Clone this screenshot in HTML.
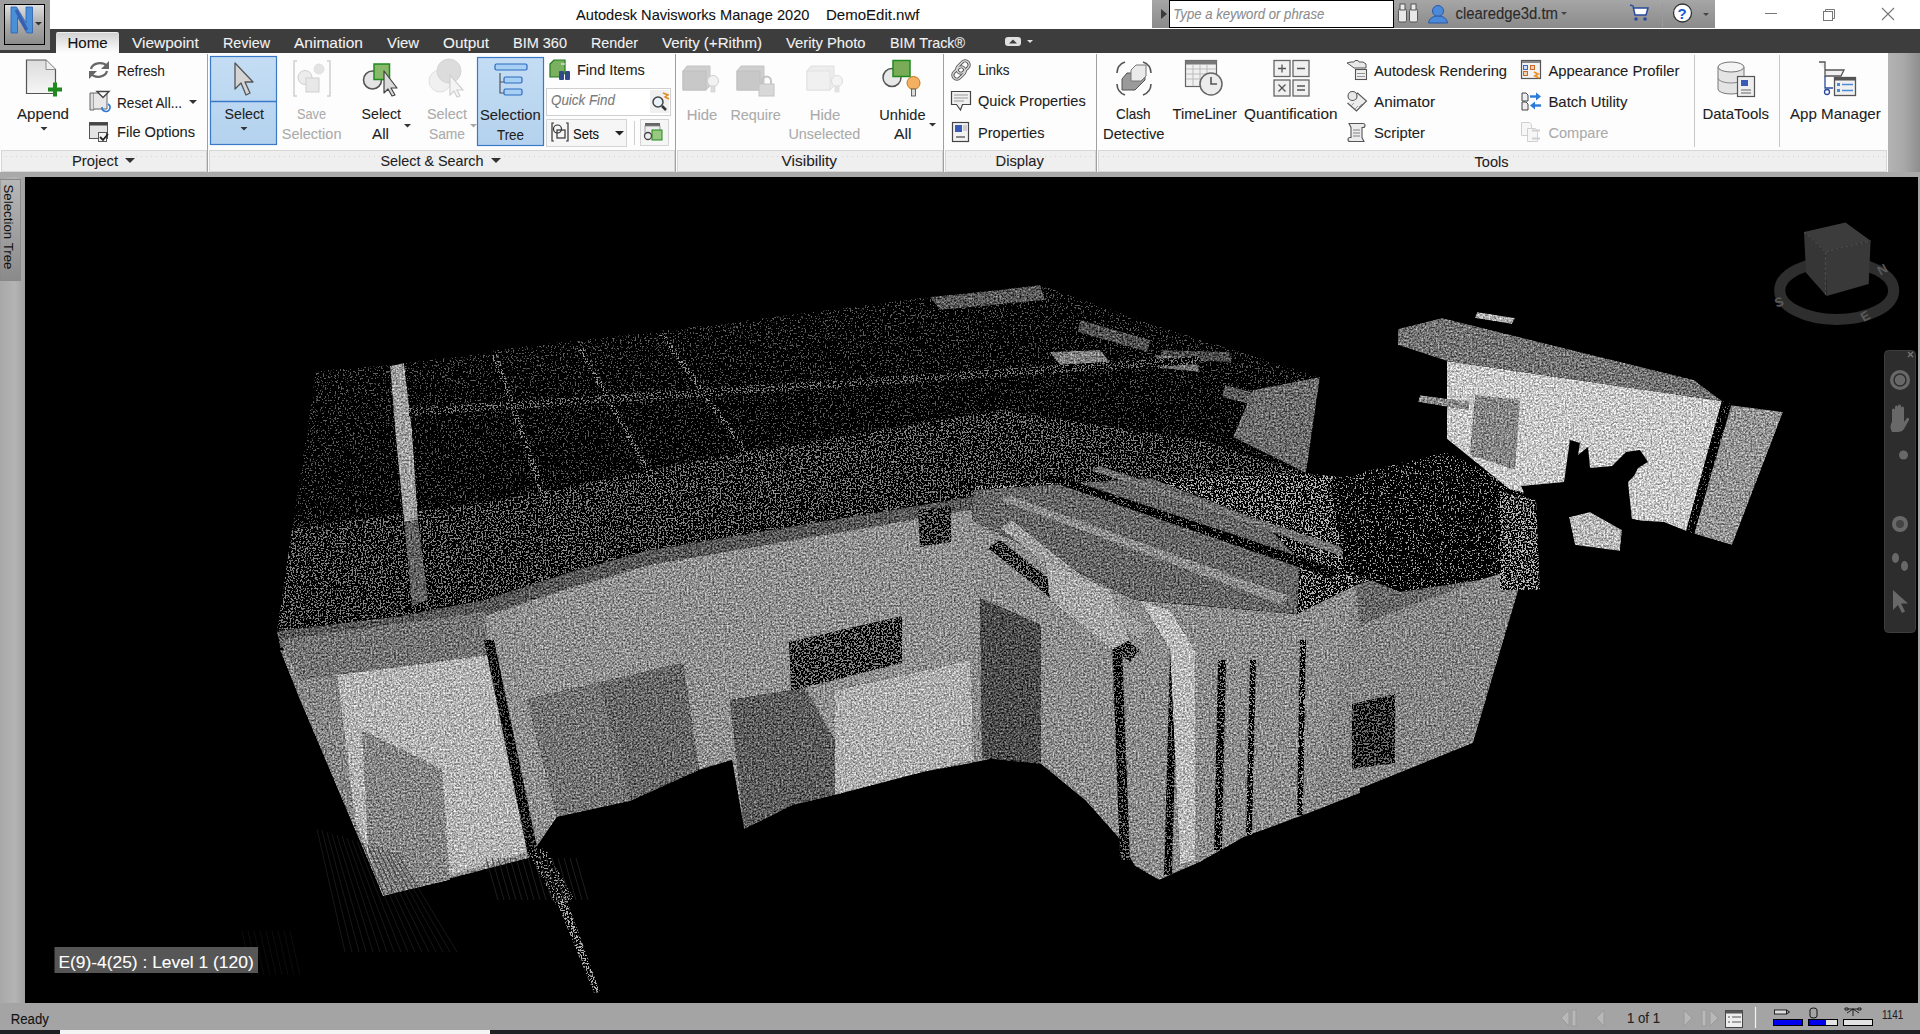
<!DOCTYPE html>
<html><head><meta charset="utf-8">
<style>
*{margin:0;padding:0;box-sizing:border-box}
html,body{width:1920px;height:1034px;overflow:hidden;background:#000;font-family:"Liberation Sans",sans-serif;}
.a{position:absolute}
svg text{font-family:"Liberation Sans",sans-serif}
</style></head><body>
<!-- title bar -->
<div class="a" style="left:0;top:0;width:1920px;height:29px;background:#fff"></div>
<div class="a" style="left:0;top:0;width:50px;height:50px;background:#9c9c9c"></div>
<div class="a" style="left:4px;top:4px;width:41px;height:41px;border:1px solid #000;background:linear-gradient(#e0e0e0,#a8a8a8 55%,#8c8c8c)"></div>
<!-- infocenter -->
<div class="a" style="left:1152px;top:0;width:563px;height:28px;background:linear-gradient(#a6a6a6,#8a8a8a)"></div>
<div class="a" style="left:1169px;top:0;width:225px;height:28px;background:#fff;border:1px solid #000"></div>
<!-- tab bar -->
<div class="a" style="left:50px;top:29px;width:1870px;height:24px;background:#3d3d3d"></div>
<div class="a" style="left:0;top:50px;width:50px;height:3px;background:#3d3d3d"></div>
<div class="a" style="left:56px;top:32px;width:63px;height:21px;background:linear-gradient(#d2d2d2,#f6f6f6 80%,#fdfdfd);border-radius:2px 2px 0 0;border-top:1px solid #eee"></div>
<!-- ribbon -->
<div class="a" style="left:0;top:53px;width:1888px;height:119px;background:#fdfdfd"></div>
<div class="a" style="left:1888px;top:53px;width:32px;height:119px;background:linear-gradient(90deg,#b4b4b4,#a8a8a8 50%,#8e8e8e)"></div>
<div class="a" style="left:0;top:172px;width:1920px;height:5px;background:#a9a9a9"></div>
<!-- viewport -->
<div class="a" style="left:0;top:177px;width:25px;height:826px;background:linear-gradient(90deg,#a8a8a8,#b4b4b4 60%,#a0a0a0)"></div>
<div class="a" style="left:25px;top:177px;width:1893px;height:826px;background:#000"></div>
<div class="a" style="left:1918px;top:177px;width:2px;height:826px;background:#a5a5a5"></div>
<!-- status bar -->
<div class="a" style="left:0;top:1003px;width:1920px;height:27px;background:#a4a4a4"></div>
<div class="a" style="left:0;top:1030px;width:1920px;height:4px;background:#1f2023"></div>
<div class="a" style="left:60px;top:1030px;width:430px;height:4px;background:#f4f4f4"></div>
<svg class="a" style="left:0;top:0" width="1920" height="1034" viewBox="0 0 1920 1034">
<defs>
<filter id="spk0" filterUnits="userSpaceOnUse" x="25" y="177" width="1893" height="826" color-interpolation-filters="sRGB">
<feTurbulence type="fractalNoise" baseFrequency="0.55" numOctaves="2" seed="11" result="t"/>
<feColorMatrix in="t" type="matrix" values="1 0 0 0 0  1 0 0 0 0  1 0 0 0 0  0 0 0 0 1" result="g"/>
<feComposite in="SourceGraphic" in2="g" operator="arithmetic" k1="0" k2="1" k3="1.0" k4="-0.5" result="c"/>
<feComposite in="c" in2="SourceGraphic" operator="in"/>
</filter>
<filter id="spk1" filterUnits="userSpaceOnUse" x="25" y="177" width="1893" height="826" color-interpolation-filters="sRGB">
<feTurbulence type="fractalNoise" baseFrequency="0.55" numOctaves="2" seed="12" result="t"/>
<feColorMatrix in="t" type="matrix" values="1 0 0 0 0  1 0 0 0 0  1 0 0 0 0  0 0 0 0 1" result="g"/>
<feComponentTransfer in="g" result="b"><feFuncR type="linear" slope="12" intercept="-7.3454"/><feFuncG type="linear" slope="12" intercept="-7.3454"/><feFuncB type="linear" slope="12" intercept="-7.3454"/></feComponentTransfer>
<feComposite in="SourceGraphic" in2="b" operator="arithmetic" k1="1" k2="0" k3="0" k4="0"/>
</filter>
<filter id="spk2" filterUnits="userSpaceOnUse" x="25" y="177" width="1893" height="826" color-interpolation-filters="sRGB">
<feTurbulence type="fractalNoise" baseFrequency="0.6" numOctaves="2" seed="13" result="t"/>
<feColorMatrix in="t" type="matrix" values="1 0 0 0 0  1 0 0 0 0  1 0 0 0 0  0 0 0 0 1" result="g"/>
<feComponentTransfer in="g" result="b"><feFuncR type="linear" slope="12" intercept="-6.9925"/><feFuncG type="linear" slope="12" intercept="-6.9925"/><feFuncB type="linear" slope="12" intercept="-6.9925"/></feComponentTransfer>
<feComposite in="SourceGraphic" in2="b" operator="arithmetic" k1="1" k2="0" k3="0" k4="0"/>
</filter>
<filter id="spk3" filterUnits="userSpaceOnUse" x="25" y="177" width="1893" height="826" color-interpolation-filters="sRGB">
<feTurbulence type="fractalNoise" baseFrequency="0.6" numOctaves="2" seed="14" result="t"/>
<feColorMatrix in="t" type="matrix" values="1 0 0 0 0  1 0 0 0 0  1 0 0 0 0  0 0 0 0 1" result="g"/>
<feComponentTransfer in="g" result="b"><feFuncR type="linear" slope="12" intercept="-6.4713"/><feFuncG type="linear" slope="12" intercept="-6.4713"/><feFuncB type="linear" slope="12" intercept="-6.4713"/></feComponentTransfer>
<feComposite in="SourceGraphic" in2="b" operator="arithmetic" k1="1" k2="0" k3="0" k4="0"/>
</filter>
<filter id="spk4" filterUnits="userSpaceOnUse" x="25" y="177" width="1893" height="826" color-interpolation-filters="sRGB">
<feTurbulence type="fractalNoise" baseFrequency="0.55" numOctaves="2" seed="15" result="t"/>
<feColorMatrix in="t" type="matrix" values="1 0 0 0 0  1 0 0 0 0  1 0 0 0 0  0 0 0 0 1" result="g"/>
<feComponentTransfer in="g" result="b"><feFuncR type="linear" slope="12" intercept="-6.2551"/><feFuncG type="linear" slope="12" intercept="-6.2551"/><feFuncB type="linear" slope="12" intercept="-6.2551"/></feComponentTransfer>
<feComposite in="SourceGraphic" in2="b" operator="arithmetic" k1="1" k2="0" k3="0" k4="0"/>
</filter>
<filter id="spk5" filterUnits="userSpaceOnUse" x="25" y="177" width="1893" height="826" color-interpolation-filters="sRGB">
<feTurbulence type="fractalNoise" baseFrequency="0.6" numOctaves="2" seed="16" result="t"/>
<feColorMatrix in="t" type="matrix" values="1 0 0 0 0  1 0 0 0 0  1 0 0 0 0  0 0 0 0 1" result="g"/>
<feComponentTransfer in="g" result="b"><feFuncR type="linear" slope="12" intercept="-6.2551"/><feFuncG type="linear" slope="12" intercept="-6.2551"/><feFuncB type="linear" slope="12" intercept="-6.2551"/></feComponentTransfer>
<feComposite in="SourceGraphic" in2="b" operator="arithmetic" k1="1" k2="0" k3="0" k4="0"/>
</filter>
<filter id="spk6" filterUnits="userSpaceOnUse" x="25" y="177" width="1893" height="826" color-interpolation-filters="sRGB">
<feTurbulence type="fractalNoise" baseFrequency="0.6" numOctaves="2" seed="17" result="t"/>
<feColorMatrix in="t" type="matrix" values="1 0 0 0 0  1 0 0 0 0  1 0 0 0 0  0 0 0 0 1" result="g"/>
<feComponentTransfer in="g" result="b"><feFuncR type="linear" slope="12" intercept="-6.0549"/><feFuncG type="linear" slope="12" intercept="-6.0549"/><feFuncB type="linear" slope="12" intercept="-6.0549"/></feComponentTransfer>
<feComposite in="SourceGraphic" in2="b" operator="arithmetic" k1="1" k2="0" k3="0" k4="0"/>
</filter>
<filter id="spk7" filterUnits="userSpaceOnUse" x="25" y="177" width="1893" height="826" color-interpolation-filters="sRGB">
<feTurbulence type="fractalNoise" baseFrequency="0.55" numOctaves="2" seed="18" result="t"/>
<feColorMatrix in="t" type="matrix" values="1 0 0 0 0  1 0 0 0 0  1 0 0 0 0  0 0 0 0 1" result="g"/>
<feComponentTransfer in="g" result="b"><feFuncR type="linear" slope="12" intercept="-5.8648"/><feFuncG type="linear" slope="12" intercept="-5.8648"/><feFuncB type="linear" slope="12" intercept="-5.8648"/></feComponentTransfer>
<feComposite in="SourceGraphic" in2="b" operator="arithmetic" k1="1" k2="0" k3="0" k4="0"/>
</filter>
<filter id="spk8" filterUnits="userSpaceOnUse" x="25" y="177" width="1893" height="826" color-interpolation-filters="sRGB">
<feTurbulence type="fractalNoise" baseFrequency="0.6" numOctaves="2" seed="19" result="t"/>
<feColorMatrix in="t" type="matrix" values="1 0 0 0 0  1 0 0 0 0  1 0 0 0 0  0 0 0 0 1" result="g"/>
<feComponentTransfer in="g" result="b"><feFuncR type="linear" slope="12" intercept="-5.8648"/><feFuncG type="linear" slope="12" intercept="-5.8648"/><feFuncB type="linear" slope="12" intercept="-5.8648"/></feComponentTransfer>
<feComposite in="SourceGraphic" in2="b" operator="arithmetic" k1="1" k2="0" k3="0" k4="0"/>
</filter>
</defs>
<g filter="url(#spk2)">
<polygon points="316,371 391,365 406,363 489,353 495,350 728,323 930,297 1040,285 1160,327 1320,377 1306,473 1000,492 650,550 570,572 484,600 400,616 277,631" fill="#5e5e5e"/>
</g>
<g filter="url(#spk5)">
<polygon points="292,529 500,500 728,455 1000,410 1200,440 1306,473 1000,492 650,550 570,572 484,600 400,616 277,631" fill="#888888"/>
</g>
<g filter="url(#spk0)">
<polygon points="1080,320 1150,340 1148,352 1078,332" fill="#525252"/>
<polygon points="1225,385 1275,398 1272,410 1222,397" fill="#595959"/>
<polygon points="1160,350 1230,352 1232,362 1162,360" fill="#4c4c4c"/>
<polygon points="1290,385 1315,378 1310,400 1288,400" fill="#595959"/>
<polygon points="1253,390 1320,377 1306,473 1233,437" fill="#6b6b6b"/>
<polygon points="390,366 404,363 412,430 418,520 404,522 396,440" fill="#9e9e9e"/>
<polygon points="404,522 418,520 428,600 412,606" fill="#616161"/>
<polygon points="930,297 1000,290 1040,285 1045,300 940,310" fill="#595959"/>
<polygon points="1050,352 1100,350 1110,362 1060,365" fill="#808080"/>
<polygon points="1155,355 1195,358 1200,372 1160,368" fill="#737373"/>
</g>
<g filter="url(#spk5)">
<polygon points="491,354 497,353 568,554 562,556" fill="#999999"/>
<polygon points="577,348 583,347 685,531 679,533" fill="#999999"/>
<polygon points="658,334 664,333 786,503 780,505" fill="#999999"/>
<polygon points="409,408 1060,365 1200,356 1200,364 1060,373 409,416" fill="#888888"/>
</g>
<g filter="url(#spk0)">
<polygon points="277,633 400,618 484,602 570,574 650,552 1000,494 1005,756 967,764 923,772 835,795 793,805 744,829 732,760 699,770 630,801 557,817 529,858 383,896" fill="#8f8f8f"/>
<polygon points="277,631 400,616 484,600 570,572 650,550 1000,492 1000,505 650,565 570,588 484,616 400,634 280,648" fill="#575757"/>
<polygon points="335,655 486,640 530,851 383,896 355,820" fill="#b2b2b2"/>
<polygon points="280,650 335,655 355,820 383,896 300,700" fill="#858585"/>
<polygon points="362,730 442,769 450,880 383,896 368,850" fill="#858585"/>
<polygon points="280,640 484,612 490,655 300,680" fill="#737373"/>
</g>
<g filter="url(#spk4)">
<polygon points="484,640 494,640 538,852 528,856" fill="#666666"/>
</g>
<g filter="url(#spk0)">
<polygon points="527,699 683,663 699,770 630,801 557,817" fill="#737373"/>
<polygon points="600,685 683,663 699,770 630,801" fill="#666666"/>
</g>
<g filter="url(#spk7)">
<polygon points="789,642 902,616 902,663 791,691" fill="#8c8c8c"/>
</g>
<g filter="url(#spk0)">
<polygon points="730,700 805,688 835,740 835,795 793,805 744,829" fill="#5c5c5c"/>
<polygon points="835,690 970,660 975,760 923,772 835,795" fill="#adadad"/>
</g>
<g filter="url(#spk7)">
<polygon points="918,510 951,506 951,542 920,547" fill="#808080"/>
</g>
<g filter="url(#spk3)">
<polygon points="528,852 545,848 575,900 556,905" fill="#a3a3a3"/>
</g>
<g filter="url(#spk8)">
<polygon points="556,900 566,898 600,992 594,993" fill="#b3b3b3"/>
</g>
<g filter="url(#spk6)">
<polygon points="974,486 1306,473 1534,500 1535,534 1356,585 1297,614 1135,600 972,520" fill="#bdbdbd"/>
</g>
<g filter="url(#spk0)">
<polygon points="974,490 1150,478 1260,520 1300,560 1297,614 1135,600 972,520" fill="#666666"/>
<polygon points="1000,500 1010,496 1290,596 1280,604" fill="#8c8c8c"/>
</g>
<g filter="url(#spk2)">
<polygon points="1040,478 1052,474 1340,570 1330,578" fill="#888888"/>
</g>
<g filter="url(#spk0)">
<polygon points="1090,470 1100,466 1380,560 1370,566" fill="#737373"/>
<polygon points="972,520 1135,600 1297,614 1356,585 1360,793 1309,813 1244,837 1200,862 1159,880 1135,866 1118,837 1086,801 1041,764 972,756" fill="#8c8c8c"/>
<polygon points="1356,585 1535,534 1473,743 1310,809" fill="#858585"/>
<polygon points="1356,585 1535,534 1530,560 1360,625" fill="#666666"/>
</g>
<g filter="url(#spk8)">
<polygon points="988,548 1000,540 1140,650 1130,662" fill="#8c8c8c"/>
</g>
<g filter="url(#spk0)">
<polygon points="1000,528 1012,520 1150,630 1140,640" fill="#9e9e9e"/>
<polygon points="980,598 1041,625 1041,764 982,758" fill="#4c4c4c"/>
</g>
<g filter="url(#spk7)">
<polygon points="1352,704 1395,694 1395,763 1352,769" fill="#737373"/>
</g>
<g filter="url(#spk4)">
<polygon points="1112,640 1122,645 1130,860 1120,860" fill="#808080"/>
<polygon points="1170,650 1178,650 1172,875 1164,875" fill="#808080"/>
<polygon points="1218,660 1226,660 1222,850 1214,850" fill="#999999"/>
<polygon points="1250,660 1256,660 1252,835 1246,835" fill="#aaaaaa"/>
<polygon points="1300,640 1306,640 1303,815 1297,815" fill="#aaaaaa"/>
</g>
<g filter="url(#spk0)">
<polygon points="1140,600 1170,610 1195,650 1195,860 1180,865 1170,650" fill="#b8b8b8"/>
<polygon points="1045,560 1110,590 1130,640 1112,650 1050,600" fill="#a6a6a6"/>
</g>
<g filter="url(#spk2)">
<polygon points="1330,480 1447,452 1526,492 1560,520 1545,560 1480,580 1400,592 1345,570" fill="#aaaaaa"/>
</g>
<g filter="url(#spk0)">
<polygon points="1398,329 1442,318 1694,380 1722,401 1447,361 1398,345" fill="#737373"/>
<polygon points="1477,312 1515,318 1512,324 1475,318" fill="#b2b2b2"/>
<polygon points="1447,361 1722,401 1686,532 1509,489 1447,439" fill="#c7c7c7"/>
<polygon points="1475,395 1520,400 1515,470 1470,455" fill="#858585"/>
<polygon points="1730,405 1783,412 1732,545 1694,534" fill="#949494"/>
</g>
<g filter="url(#spk1)">
<polygon points="1722,401 1732,403 1694,534 1686,532" fill="#808080"/>
</g>
<g filter="url(#spk0)">
<polygon points="1420,395 1470,402 1468,410 1418,402" fill="#8c8c8c"/>
<polygon points="1580,533 1620,545 1617,572 1578,560" fill="#9e9e9e"/>
</g>
<g filter="url(#spk1)">
<polygon points="1521,486 1564,482 1570,440 1580,443 1578,455 1588,447 1590,468 1612,466 1626,452 1640,450 1648,462 1638,468 1634,476 1628,482 1632,520 1664,522 1689,532 1740,548 1745,600 1540,600 1536,520" fill="#000000"/>
</g>
<g filter="url(#spk0)">
<polygon points="1569,517 1590,512 1622,530 1620,551 1575,545" fill="#b8b8b8"/>
</g>
<g filter="url(#spk8)">
<polygon points="1500,492 1536,500 1540,590 1500,590" fill="#bfbfbf"/>
</g>
<g stroke="#222" stroke-width="1" opacity="0.7"><line x1="317" y1="829" x2="345" y2="952"/><line x1="322" y1="830" x2="352" y2="952"/><line x1="327" y1="832" x2="359" y2="952"/><line x1="332" y1="834" x2="366" y2="952"/><line x1="337" y1="835" x2="373" y2="952"/><line x1="342" y1="836" x2="380" y2="952"/><line x1="347" y1="838" x2="387" y2="952"/><line x1="352" y1="840" x2="394" y2="952"/><line x1="357" y1="841" x2="401" y2="952"/><line x1="362" y1="842" x2="408" y2="952"/><line x1="367" y1="844" x2="415" y2="952"/><line x1="372" y1="846" x2="422" y2="952"/><line x1="377" y1="847" x2="429" y2="952"/><line x1="382" y1="848" x2="436" y2="952"/><line x1="387" y1="850" x2="443" y2="952"/><line x1="392" y1="852" x2="450" y2="952"/><line x1="397" y1="853" x2="457" y2="952"/></g>
<g stroke="#1a1a1a" stroke-width="1" opacity="0.5"><line x1="242" y1="931" x2="252" y2="975"/><line x1="248" y1="931" x2="258" y2="975"/><line x1="254" y1="931" x2="264" y2="975"/><line x1="260" y1="931" x2="270" y2="975"/><line x1="266" y1="931" x2="276" y2="975"/><line x1="272" y1="931" x2="282" y2="975"/><line x1="278" y1="931" x2="288" y2="975"/><line x1="284" y1="931" x2="294" y2="975"/><line x1="290" y1="931" x2="300" y2="975"/></g>
<g stroke="#262626" stroke-width="1" opacity="0.8"><line x1="486" y1="858" x2="498" y2="900"/><line x1="492" y1="858" x2="504" y2="900"/><line x1="498" y1="858" x2="510" y2="900"/><line x1="504" y1="858" x2="516" y2="900"/><line x1="510" y1="858" x2="522" y2="900"/><line x1="516" y1="858" x2="528" y2="900"/><line x1="522" y1="858" x2="534" y2="900"/><line x1="528" y1="858" x2="540" y2="900"/><line x1="534" y1="858" x2="546" y2="900"/><line x1="540" y1="858" x2="552" y2="900"/><line x1="546" y1="858" x2="558" y2="900"/><line x1="552" y1="858" x2="564" y2="900"/><line x1="558" y1="858" x2="570" y2="900"/><line x1="564" y1="858" x2="576" y2="900"/><line x1="570" y1="858" x2="582" y2="900"/><line x1="576" y1="858" x2="588" y2="900"/></g>
<ellipse cx="1836.7" cy="290.4" rx="57" ry="29" fill="none" stroke="#2e2e2e" stroke-width="11"/>
<polygon points="1804,232 1845.5,222.6 1870.6,240.8 1825.4,252" fill="#3c3c3c"/>
<polygon points="1804,232 1825.4,252 1826.6,296 1806,272.8" fill="#363636"/>
<polygon points="1825.4,252 1870.6,240.8 1868.7,284 1826.6,296" fill="#393939"/>
<path d="M1825.4 252 V296 M1804 232 L1825.4 252 L1870.6 240.8" stroke="#555" stroke-width="0.8" stroke-dasharray="3 2" fill="none"/>
<g fill="#5a5a5a" style="font-size:13px;font-weight:bold"><text x="1774" y="306" transform="rotate(-20 1780 300)">S</text><text x="1877" y="273" transform="rotate(-30 1884 268)">N</text><text x="1860" y="320" transform="rotate(-30 1866 314)">E</text></g>
<rect x="1884.5" y="350.5" width="31" height="282" rx="4" fill="#2d2d2d" stroke="#3e3e3e"/>
<g fill="#686868" stroke="none">
<path d="M1908 352 l5 5 M1913 352 l-5 5" stroke="#777" stroke-width="1.2"/>
<circle cx="1900" cy="380" r="10"/>
<path d="M1892 432 q-3-6 0-10 v-12 a1.5 1.5 0 0 1 3 0 v8 v-11 a1.5 1.5 0 0 1 3 0 v11 v-12 a1.5 1.5 0 0 1 3 0 v12 v-10 a1.5 1.5 0 0 1 3 0 v14 l3-4 a1.5 1.5 0 0 1 2 2 l-5 9 q-2 3 -6 3z"/>
<circle cx="1903.5" cy="455" r="4.5"/>
<circle cx="1900" cy="524" r="8"/>
<ellipse cx="1895.5" cy="558" rx="3.5" ry="5"/><ellipse cx="1904.5" cy="566" rx="3.5" ry="5"/>
<path d="M1893 590 v20 l5-5 l4 8 l3-1.5 l-4-8 h7z"/>
</g>
<circle cx="1900" cy="380" r="6" fill="none" stroke="#2d2d2d" stroke-width="1.5"/>
<circle cx="1900" cy="524" r="4" fill="#444"/>
<defs>
<linearGradient id="pg" x1="0" y1="0" x2="0" y2="1"><stop offset="0" stop-color="#dcdcdc"/><stop offset="1" stop-color="#f6f6f6"/></linearGradient>
<linearGradient id="cubeg" x1="0" y1="0" x2="1" y2="1"><stop offset="0" stop-color="#d8d8d8"/><stop offset="1" stop-color="#9c9c9c"/></linearGradient>
<linearGradient id="btnblue" x1="0" y1="0" x2="0" y2="1"><stop offset="0" stop-color="#c4ddf4"/><stop offset="1" stop-color="#b4d2ee"/></linearGradient>
<linearGradient id="greyv" x1="0" y1="0" x2="0" y2="1"><stop offset="0" stop-color="#b8b8b8"/><stop offset="1" stop-color="#8a8a8a"/></linearGradient>
</defs>
<!-- app button N logo -->
<path d="M11 33 V7 h5.5 L26 23 V7 h6.5 V33 h-5.5 L17.5 17 V33 Z" fill="#4a90d9" stroke="#2a5fb0" stroke-width="0.8"/>
<path d="M16 10 L27 30" stroke="#2e3f9a" stroke-width="3" opacity="0.6"/>
<path d="M35 22 h7 l-3.5 3.5z" fill="#333"/>
<!-- window controls -->
<path d="M1765 13.5 h12" stroke="#777" stroke-width="1"/>
<rect x="1823.5" y="11.5" width="9" height="9" fill="none" stroke="#777"/>
<path d="M1825.5 11.5 v-2 h9 v9 h-2" fill="none" stroke="#777"/>
<path d="M1882 8 L1894 20 M1894 8 L1882 20" stroke="#777" stroke-width="1.1"/>
<!-- infocenter icons -->
<path d="M1161 9 l6 5 l-6 5z" fill="#3a3a3a"/>
<g fill="#e8e8e8" stroke="#555" stroke-width="1">
<rect x="1398.5" y="9" width="8" height="13" rx="1.5"/><rect x="1409.5" y="9" width="8" height="13" rx="1.5"/>
<rect x="1400" y="4" width="5" height="6"/><rect x="1411" y="4" width="5" height="6"/>
</g>
<circle cx="1438" cy="11" r="5.5" fill="#4a8ad8" stroke="#2a5aa8"/>
<path d="M1428.5 23 q1-7 9.5-7 q8.5 0 9.5 7z" fill="#4a8ad8" stroke="#2a5aa8"/>
<path d="M1561 12 h6 l-3 3z" fill="#444"/>
<path d="M1630 5 l3 1 l2 9 h11 l2-7 h-14" fill="#fff" stroke="#2a4a9a" stroke-width="1.5"/>
<circle cx="1636" cy="19" r="1.8" fill="#2a4a9a"/><circle cx="1645" cy="19" r="1.8" fill="#2a4a9a"/>
<path d="M1662.5 3 v24" stroke="#9a9a9a"/>
<circle cx="1682.5" cy="13" r="9" fill="#fff" stroke="#333" stroke-width="1.3"/>
<text x="1677.5" y="19" style="font-size:15px;font-weight:bold;fill:#1a5ad0">?</text>
<path d="M1703 13 h6 l-3 3z" fill="#444"/>
<!-- tab bar icon -->
<rect x="1005" y="37" width="16" height="9" rx="3" fill="#e0e0e0"/>
<path d="M1009 43.5 l4-4 l4 4z" fill="#3d3d3d"/>
<path d="M1027 40 h6 l-3 3z" fill="#e0e0e0"/>
<!-- panel title bars -->
<g fill="#efefef" stroke="#d6d6d6" stroke-width="1">
<rect x="1.5" y="150.5" width="205" height="21"/>
<rect x="209.5" y="150.5" width="465" height="21"/>
<rect x="677.5" y="150.5" width="265" height="21"/>
<rect x="945.5" y="150.5" width="150" height="21"/>
<rect x="1098.5" y="150.5" width="788" height="21"/>
</g>
<g stroke="#d4d4d4" stroke-width="1" stroke-dasharray="1 4">
<path d="M6 156.5 H204 M214 156.5 H672 M682 156.5 H940 M950 156.5 H1093 M1103 156.5 H1884"/>
</g>
<g stroke="#a0a0a0" stroke-width="1">
<path d="M207.5 54 V172 M675.5 54 V172 M943.5 54 V172 M1096.5 54 V172"/>
</g>
<g stroke="#c8c8c8" stroke-width="1">
<path d="M1694.5 55 V147 M1779.5 55 V147"/>
</g>
<!-- panel dropdown arrows -->
<path d="M125 158 h10 l-5 5z" fill="#333"/>
<path d="M491 158 h10 l-5 5z" fill="#333"/>
<!-- button arrows -->
<path d="M40.5 127 h7 l-3.5 3.5z" fill="#333"/>
<path d="M189 100 h8 l-4 4z" fill="#333"/>
<path d="M404 124 h7 l-3.5 3.5z" fill="#333"/>
<path d="M470 124 h7 l-3.5 3.5z" fill="#aaa"/>
<path d="M929 123 h7 l-3.5 3.5z" fill="#333"/>
<!-- Append -->
<path d="M26.5 60 H46 L55.5 69.5 V93.5 H26.5 Z" fill="url(#pg)" stroke="#555" stroke-width="1.2"/>
<path d="M46 60 V69.5 H55.5" fill="#f0f0f0" stroke="#777" stroke-width="0.8"/>
<path d="M48 89.5 H62 M55 82.5 V96.5" stroke="#1e8a1e" stroke-width="4"/>
<!-- Refresh -->
<g fill="none" stroke="#666" stroke-width="2.2">
<path d="M91 69 a9 7 0 0 1 16 -3"/><path d="M107 71 a9 7 0 0 1 -16 3"/>
</g>
<path d="M109 61 v8 h-8z" fill="#666"/><path d="M89 79 v-8 h8z" fill="#666"/>
<!-- Reset All -->
<path d="M90 93 h4 v17 h-4z" fill="#ddd" stroke="#666"/>
<path d="M94 93 h13 v16 h-13" fill="#e8e8e8" stroke="#666"/>
<path d="M97 91.5 h12 l-6 6z" fill="#fff" stroke="#444" stroke-width="1.4"/>
<path d="M102 107 a4 4 0 1 0 6 -3" fill="none" stroke="#2a7ad8" stroke-width="1.6"/>
<!-- File Options -->
<rect x="89.5" y="122.5" width="18" height="16" fill="#e4e4e4" stroke="#555"/>
<rect x="89.5" y="122.5" width="18" height="3" fill="#444"/>
<rect x="98.5" y="132.5" width="8" height="9" fill="#f4f4f4" stroke="#555"/>
<path d="M100 137 l3 3 l5-6" fill="none" stroke="#222" stroke-width="1.8"/>
<!-- Select button -->
<rect x="210.5" y="56.5" width="66" height="88" fill="url(#btnblue)" stroke="#3a78c8" stroke-width="1.2"/>
<path d="M211 101.5 H276" stroke="#3a78c8" stroke-width="1.5"/>
<path d="M240.5 127 h7 l-3.5 3.5z" fill="#333"/>
<path d="M235 63 V89 L241 83 L246 95 L250 93 L245 82 H253 Z" fill="#d4d4d4" stroke="#555" stroke-width="1.3" stroke-linejoin="round"/>
<!-- Save Selection (disabled) -->
<g fill="none" stroke="#cfcfcf" stroke-width="1.5">
<path d="M297 61 h-3 v35 h3"/><path d="M327 61 h3 v35 h-3"/>
</g>
<circle cx="305" cy="77.5" r="7" fill="#ececec" stroke="#cfcfcf"/>
<rect x="306" y="78" width="13" height="14" fill="#e8e8e8" stroke="#cfcfcf"/>
<circle cx="319" cy="69" r="5" fill="#e4e4e4" stroke="#d8d8d8" stroke-dasharray="1.5 1"/>
<!-- Select All -->
<circle cx="372.5" cy="80" r="9" fill="#e4e4e4" stroke="#555" stroke-width="1.6"/>
<rect x="374" y="64" width="15.5" height="15.5" fill="#8ab86a" stroke="#1e8a1e" stroke-width="1.5"/>
<path d="M384 71 V93 L388 89 L392 96 L395 95 L391 88 H397 Z" fill="#dcdcdc" stroke="#444" stroke-width="1.2" stroke-linejoin="round"/>
<!-- Select Same -->
<circle cx="440" cy="81" r="11" fill="#f0f0f0" stroke="#e0e0e0"/>
<circle cx="449" cy="71" r="12" fill="#dcdcdc" stroke="#d4d4d4"/>
<path d="M450 75 V95 L454 91 L457 97 L460 96 L457 90 H463 Z" fill="#f4f4f4" stroke="#d0d0d0" stroke-width="1.2"/>
<!-- Selection Tree button -->
<rect x="477.5" y="57.5" width="66" height="88" fill="url(#btnblue)" stroke="#3a78c8" stroke-width="1.2"/>
<path d="M500 73 V93 H506 M500 82 H506" fill="none" stroke="#555" stroke-width="1.2"/>
<rect x="495" y="64" width="32" height="6" rx="1.5" fill="#a8d0f4" stroke="#2a6ac0" stroke-width="1.2"/>
<rect x="504" y="77" width="18" height="6" rx="1.5" fill="#a8d0f4" stroke="#2a6ac0" stroke-width="1.2"/>
<rect x="504" y="89" width="18" height="6" rx="1.5" fill="#a8d0f4" stroke="#2a6ac0" stroke-width="1.2"/>
<!-- Find Items -->
<path d="M550 64 l4-4 h11 v13 l-4 4 h-11z" fill="#7ab060" stroke="#1e7a1e" stroke-width="1.2"/>
<path d="M561 64 h4" stroke="#fff"/>
<g fill="#334a8a"><rect x="559" y="71" width="5" height="9" rx="1"/><rect x="565" y="71" width="5" height="9" rx="1"/></g>
<!-- Quick Find box -->
<rect x="546.5" y="88.5" width="124" height="27" fill="#fff" stroke="#cfcfcf"/>
<rect x="650" y="90" width="19" height="23" fill="#f0f0f0"/>
<circle cx="658" cy="102" r="5" fill="#e8f0f8" stroke="#444" stroke-width="1.5"/>
<path d="M662 106 l4 4" stroke="#333" stroke-width="2.5"/>
<path d="M663 93 l5 2 -3 2 4 2" fill="none" stroke="#e08a20" stroke-width="1.5"/>
<!-- Sets dropdown -->
<rect x="546.5" y="119.5" width="80" height="27" fill="#f6f6f6" stroke="#d4d4d4"/>
<g fill="none" stroke="#333" stroke-width="1.2">
<path d="M554 123 h-2 v18 h2"/><path d="M566 123 h2 v18 h-2"/>
<circle cx="557.5" cy="129" r="4"/><rect x="557" y="130" width="8" height="8"/>
</g>
<path d="M615 131 h9 l-4.5 4.5z" fill="#222"/>
<path d="M634.5 121 V145" stroke="#d0d0d0"/>
<rect x="640.5" y="119.5" width="28" height="26" fill="#f6f6f6" stroke="#d4d4d4"/>
<rect x="645" y="123" width="15" height="3" fill="#666"/>
<rect x="645" y="126" width="15" height="9" fill="#eee" stroke="#888" stroke-width="0.8"/>
<rect x="652" y="130" width="10" height="10" fill="#9ac880" stroke="#1e8a1e"/>
<circle cx="648" cy="136" r="3.5" fill="#eee" stroke="#444" stroke-width="1.3"/>
<!-- Hide -->
<path d="M683 71 l4-5 h23 v20 l-4 4 h-23z" fill="#cfcfcf" stroke="#c4c4c4"/>
<rect x="683" y="71" width="23" height="19" fill="#c8c8c8" stroke="#c0c0c0"/>
<circle cx="713" cy="81" r="5.5" fill="#f2f2f2" stroke="#d0d0d0"/>
<rect x="711" y="86" width="4" height="6" fill="#ddd" stroke="#ccc" stroke-width="0.6"/>
<!-- Require -->
<path d="M737 71 l4-5 h23 v20 l-4 4 h-23z" fill="#cfcfcf" stroke="#c4c4c4"/>
<rect x="737" y="71" width="23" height="19" fill="#c8c8c8" stroke="#c0c0c0"/>
<rect x="759" y="84" width="15" height="12" fill="#d8d8d8" stroke="#c4c4c4"/>
<path d="M762 84 v-3 a4.5 4.5 0 0 1 9 0 v3" fill="none" stroke="#c4c4c4" stroke-width="2"/>
<!-- Hide Unselected -->
<path d="M807 71 l4-5 h23 v20 l-4 4 h-23z" fill="#ededed" stroke="#e0e0e0"/>
<rect x="807" y="71" width="23" height="19" fill="#f0f0f0" stroke="#e2e2e2"/>
<circle cx="837" cy="81" r="5.5" fill="#f4f4f4" stroke="#ddd"/>
<rect x="835" y="86" width="4" height="6" fill="#e4e4e4" stroke="#d8d8d8" stroke-width="0.6"/>
<!-- Unhide All -->
<circle cx="892" cy="77.5" r="9" fill="#e8e8e8" stroke="#555" stroke-width="1.5"/>
<rect x="893" y="60.5" width="17" height="16" fill="#7aac58" stroke="#1e8a1e" stroke-width="1.5"/>
<circle cx="913.5" cy="83" r="6.5" fill="#f2b060" stroke="#c07820"/>
<rect x="911.5" y="89" width="4" height="7" fill="#ddd" stroke="#444" stroke-width="0.8"/>
<!-- Links -->
<g fill="none" stroke="#555" stroke-width="3.2"><rect x="955" y="66" width="8" height="14" rx="4" transform="rotate(45 959 73)"/><rect x="959" y="60" width="8" height="14" rx="4" transform="rotate(45 963 67)"/></g>
<g fill="none" stroke="#ddd" stroke-width="1.4"><rect x="955" y="66" width="8" height="14" rx="4" transform="rotate(45 959 73)"/><rect x="959" y="60" width="8" height="14" rx="4" transform="rotate(45 963 67)"/></g>
<!-- Quick Properties -->
<path d="M951.5 91.5 h19 v13 h-8 l-2 5.5 l-4 -5.5 h-5z" fill="#f0f0f0" stroke="#444" stroke-width="1.2"/>
<path d="M954 95 h14 M954 98 h14 M954 101 h10" stroke="#999" stroke-width="1"/>
<!-- Properties -->
<rect x="952.5" y="122.5" width="16" height="19" fill="#f2f2f2" stroke="#444" stroke-width="1.2"/>
<rect x="955" y="125" width="7" height="7" fill="#3a5ab8"/>
<path d="M964 125 v6 M966 125 v6" stroke="#aaa"/>
<path d="M956 137 h9" stroke="#444" stroke-width="1.2"/>
<!-- Clash Detective -->
<g fill="none" stroke="#555" stroke-width="1.6">
<path d="M1117 73 a12 12 0 0 1 8 -11"/><path d="M1143 62 a12 12 0 0 1 8 11"/>
<path d="M1117 84 a12 12 0 0 0 8 11"/><path d="M1143 95 a12 12 0 0 0 8 -11"/>
</g>
<path d="M1122 79 l5 -6 h13 l5 -6 v13 l-10 10 h-13z" fill="#9a9a9a" stroke="#555"/>
<path d="M1131 70 l5 -5 h10 v11 l-5 5 h-10z" fill="#eaeaea" stroke="#777"/>
<!-- TimeLiner -->
<rect x="1185.5" y="60.5" width="31" height="26" fill="#f0f0f0" stroke="#666" stroke-width="1.2"/>
<rect x="1185.5" y="60.5" width="31" height="4" fill="#777"/>
<path d="M1186 69 h30 M1186 74 h30 M1186 79 h30 M1193 65 v21 M1200 65 v21 M1207 65 v21" stroke="#bbb"/>
<circle cx="1211" cy="84" r="11" fill="#ececec" stroke="#666" stroke-width="1.5"/>
<path d="M1211 77 v7 h6" fill="none" stroke="#555" stroke-width="1.6"/>
<!-- Quantification -->
<g fill="#f0f0f0" stroke="#666" stroke-width="1.3">
<rect x="1274" y="60.5" width="16" height="16"/><rect x="1293" y="60.5" width="16" height="16"/>
<rect x="1274" y="80" width="16" height="16"/><rect x="1293" y="80" width="16" height="16"/>
</g>
<path d="M1278 68.5 h8 M1282 64.5 v8 M1297 68.5 h8 M1278.5 84.5 l7 7 M1285.5 84.5 l-7 7 M1297 86 h8 M1297 90 h8" stroke="#555" stroke-width="1.3"/>
<!-- Autodesk Rendering -->
<path d="M1347 63 l4 -1 h3 l1 -1.5 h3 l1 1.5 h4 l3 2 v4 h-12 l-4 -3z" fill="#e8e8e8" stroke="#555" stroke-width="1"/>
<rect x="1355.5" y="69.5" width="11" height="10" fill="#eee" stroke="#555" stroke-width="1.1"/>
<path d="M1357 73.5 h8 M1357 76.5 h8" stroke="#888" stroke-width="0.9"/>
<!-- Animator -->
<path d="M1347.5 103 l9 8 l10 -10 l-9 -8 l-3 3" fill="#ececec" stroke="#555" stroke-width="1.1"/>
<path d="M1351 106 l3 -3 M1355 109 l3 -3 M1359 107 l3 -3" stroke="#999" stroke-width="0.9"/>
<circle cx="1352.5" cy="96" r="4.5" fill="#e8e8e8" stroke="#555" stroke-width="1.1"/>
<!-- Scripter -->
<path d="M1349 123.5 h14 a2 2 0 0 1 0 4 h-1 v10 q1 2 2 4 h-14 a2 2 0 0 1 0 -4 h1 v-10 q-1 -2 -2 -4z" fill="#ececec" stroke="#555" stroke-width="1.1"/>
<path d="M1353 130 h7 M1353 133 h7 M1353 136 h7" stroke="#777" stroke-width="0.9"/>
<!-- Appearance Profiler -->
<rect x="1521.5" y="60.5" width="19" height="18" fill="#f2f2f2" stroke="#555" stroke-width="1.2"/>
<rect x="1522" y="61" width="18" height="2" fill="#888"/>
<rect x="1523.5" y="65.5" width="4" height="4" fill="#cfe0f5" stroke="#3a6ac0" stroke-width="1"/>
<rect x="1530.5" y="65.5" width="4" height="4" fill="#f5d0b0" stroke="#c86a2a" stroke-width="1"/>
<rect x="1523.5" y="71.5" width="4" height="4" fill="#f5d0b0" stroke="#c86a2a" stroke-width="1"/>
<path d="M1534 72 l4 2 l-3 2 l4 2" fill="none" stroke="#e8902a" stroke-width="1.8"/>
<!-- Batch Utility -->
<path d="M1522 93 h4 l2 2 v6 h-6z M1522 102 h4 l2 2 v6 h-6z" fill="#eee" stroke="#444" stroke-width="1"/>
<path d="M1530 96.5 h8" stroke="#2a7ad8" stroke-width="2.4"/><path d="M1536 92.5 l5 4 l-5 4z" fill="#2a7ad8"/>
<path d="M1541 105.5 h-8" stroke="#2a7ad8" stroke-width="2.4"/><path d="M1535 101.5 l-5 4 l5 4z" fill="#2a7ad8"/>
<!-- Compare -->
<path d="M1521.5 122.5 h8 l2 2 v11 h-10z" fill="#f6f6f6" stroke="#d0d0d0"/>
<path d="M1527.5 128.5 h8 l2 2 v11 h-10z" fill="#f6f6f6" stroke="#d0d0d0"/>
<path d="M1532 130.5 h8 M1540 138.5 h-8" stroke="#d0d0d0" stroke-width="2"/>
<!-- DataTools -->
<path d="M1718 67 v22 a13 5 0 0 0 26 0 v-22" fill="#e4e4e4" stroke="#777"/>
<ellipse cx="1731" cy="67" rx="13" ry="5" fill="#f4f4f4" stroke="#777"/>
<path d="M1718 78 a13 5 0 0 0 26 0" fill="none" stroke="#888"/>
<rect x="1737.5" y="76.5" width="17" height="20" fill="#eee" stroke="#555" stroke-width="1.2"/>
<rect x="1741" y="80" width="7" height="6" fill="#3a5ab8"/>
<path d="M1741 90 h10 M1741 93 h10" stroke="#666"/>
<!-- App Manager -->
<path d="M1819 62 h6 v14 h16 l3 -6 h-19" fill="#f0f0f0" stroke="#555" stroke-width="1.3"/>
<circle cx="1827" cy="92" r="2.5" fill="#fff" stroke="#2a4a9a" stroke-width="1.3"/>
<path d="M1825 76 v12 h8" fill="none" stroke="#2a4a9a" stroke-width="1.3"/>
<rect x="1834.5" y="77.5" width="21" height="18" fill="#f0f0f0" stroke="#555" stroke-width="1.3"/>
<rect x="1834.5" y="77.5" width="21" height="3" fill="#555"/>
<rect x="1837" y="83" width="3" height="3" fill="#4a8ad8"/><rect x="1837" y="89" width="3" height="3" fill="#4a8ad8"/>
<path d="M1842 84.5 h11 M1842 90.5 h11" stroke="#4a8ad8" stroke-width="1.5"/>
<!-- selection tree side tab -->
<rect x="0" y="179.5" width="20.5" height="101" fill="url(#greyv)" stroke="#888"/>
<text transform="translate(4 184.5) rotate(90)" textLength="85" lengthAdjust="spacingAndGlyphs" style="font-size:13px;fill:#111" x="0" y="0">Selection Tree</text>
<!-- status bar widgets -->
<g fill="#b8b8b8" stroke="#999"><path d="M1569 1010 l-8 8 l8 8z"/><rect x="1572" y="1010" width="4" height="16"/><path d="M1604 1010 l-8 8 l8 8z"/>
<path d="M1684 1010 l8 8 l-8 8z"/><rect x="1702" y="1010" width="4" height="16"/><path d="M1710 1010 l8 8 l-8 8z"/></g>
<rect x="1725.5" y="1010.5" width="17" height="17" fill="#eee" stroke="#444"/>
<rect x="1725.5" y="1010.5" width="17" height="3" fill="#555"/>
<path d="M1728 1017 h2 M1732 1017 h9 M1728 1022 h2 M1732 1022 h9" stroke="#555"/>
<path d="M1755.5 1007 V1028" stroke="#f4f4f4" stroke-width="1.2"/>
<g stroke="#000" stroke-width="1"><rect x="1773.5" y="1019.5" width="29" height="6" fill="#0000f0"/>
<rect x="1808.5" y="1019.5" width="29" height="6" fill="#e4e4e4"/><rect x="1809" y="1020" width="17" height="5" fill="#0000f0" stroke="none"/>
<rect x="1843.5" y="1019.5" width="29" height="6" fill="#e4e4e4"/></g>
<rect x="1774.5" y="1010" width="12" height="4" fill="#ddd" stroke="#000" stroke-width="0.8"/>
<path d="M1786.5 1010 l3 2 l-3 2" fill="none" stroke="#000" stroke-width="0.8"/>
<path d="M1810 1010 a3.5 2 0 0 1 7 0 v6 a3.5 2 0 0 1 -7 0z" fill="none" stroke="#000" stroke-width="0.9"/>
<path d="M1845 1008 h3 v2 h-3z M1858 1008 h3 v2 h-3z M1848 1009 h10 M1853 1009 v7 M1853 1009 l-6 4 M1853 1009 l6 4" fill="none" stroke="#000" stroke-width="0.8"/>
<!-- level label -->
<rect x="54.5" y="947" width="203.5" height="26" fill="#565656"/>

<text x="576" y="20" textLength="233.5" lengthAdjust="spacingAndGlyphs" style="font-size:15px;fill:#111;stroke:#111;stroke-width:0.1px;">Autodesk Navisworks Manage 2020</text>
<text x="826" y="20" textLength="93.5" lengthAdjust="spacingAndGlyphs" style="font-size:15px;fill:#111;stroke:#111;stroke-width:0.1px;">DemoEdit.nwf</text>
<text x="67.5" y="47.5" textLength="40.0" lengthAdjust="spacingAndGlyphs" style="font-size:15px;fill:#111;stroke:#111;stroke-width:0.1px;">Home</text>
<text x="132" y="47.5" textLength="66.75" lengthAdjust="spacingAndGlyphs" style="font-size:15px;fill:#f2f2f2;stroke:#f2f2f2;stroke-width:0.1px;">Viewpoint</text>
<text x="223" y="47.5" textLength="47" lengthAdjust="spacingAndGlyphs" style="font-size:15px;fill:#f2f2f2;stroke:#f2f2f2;stroke-width:0.1px;">Review</text>
<text x="294" y="47.5" textLength="69" lengthAdjust="spacingAndGlyphs" style="font-size:15px;fill:#f2f2f2;stroke:#f2f2f2;stroke-width:0.1px;">Animation</text>
<text x="387" y="47.5" textLength="32" lengthAdjust="spacingAndGlyphs" style="font-size:15px;fill:#f2f2f2;stroke:#f2f2f2;stroke-width:0.1px;">View</text>
<text x="443" y="47.5" textLength="46" lengthAdjust="spacingAndGlyphs" style="font-size:15px;fill:#f2f2f2;stroke:#f2f2f2;stroke-width:0.1px;">Output</text>
<text x="513" y="47.5" textLength="54" lengthAdjust="spacingAndGlyphs" style="font-size:15px;fill:#f2f2f2;stroke:#f2f2f2;stroke-width:0.1px;">BIM 360</text>
<text x="591" y="47.5" textLength="47" lengthAdjust="spacingAndGlyphs" style="font-size:15px;fill:#f2f2f2;stroke:#f2f2f2;stroke-width:0.1px;">Render</text>
<text x="662" y="47.5" textLength="100" lengthAdjust="spacingAndGlyphs" style="font-size:15px;fill:#f2f2f2;stroke:#f2f2f2;stroke-width:0.1px;">Verity (+Rithm)</text>
<text x="786" y="47.5" textLength="79.5" lengthAdjust="spacingAndGlyphs" style="font-size:15px;fill:#f2f2f2;stroke:#f2f2f2;stroke-width:0.1px;">Verity Photo</text>
<text x="890" y="47.5" textLength="75" lengthAdjust="spacingAndGlyphs" style="font-size:15px;fill:#f2f2f2;stroke:#f2f2f2;stroke-width:0.1px;">BIM Track®</text>
<text x="1173.3" y="18.75" textLength="151" lengthAdjust="spacingAndGlyphs" style="font-size:14px;fill:#8c8c8c;stroke:#8c8c8c;stroke-width:0.1px;font-style:italic">Type a keyword or phrase</text>
<text x="1455.5" y="19.1" textLength="102.4" lengthAdjust="spacingAndGlyphs" style="font-size:16px;fill:#2a2a2a;stroke:#2a2a2a;stroke-width:0.1px;">clearedge3d.tm</text>
<text x="17" y="118.5" textLength="52" lengthAdjust="spacingAndGlyphs" style="font-size:15px;fill:#1e1e1e;stroke:#1e1e1e;stroke-width:0.1px;">Append</text>
<text x="117" y="75.8" textLength="48" lengthAdjust="spacingAndGlyphs" style="font-size:15px;fill:#1e1e1e;stroke:#1e1e1e;stroke-width:0.1px;">Refresh</text>
<text x="117" y="107.9" textLength="65" lengthAdjust="spacingAndGlyphs" style="font-size:15px;fill:#1e1e1e;stroke:#1e1e1e;stroke-width:0.1px;">Reset All...</text>
<text x="117" y="137.4" textLength="78" lengthAdjust="spacingAndGlyphs" style="font-size:15px;fill:#1e1e1e;stroke:#1e1e1e;stroke-width:0.1px;">File Options</text>
<text x="72" y="166" textLength="46" lengthAdjust="spacingAndGlyphs" style="font-size:15px;fill:#1e1e1e;stroke:#1e1e1e;stroke-width:0.1px;">Project</text>
<text x="224.5" y="118.5" textLength="39.5" lengthAdjust="spacingAndGlyphs" style="font-size:15px;fill:#1e1e1e;stroke:#1e1e1e;stroke-width:0.1px;">Select</text>
<text x="297" y="118.5" textLength="29" lengthAdjust="spacingAndGlyphs" style="font-size:15px;fill:#ababab;stroke:#ababab;stroke-width:0.1px;">Save</text>
<text x="281.8" y="138.7" textLength="59.7" lengthAdjust="spacingAndGlyphs" style="font-size:15px;fill:#ababab;stroke:#ababab;stroke-width:0.1px;">Selection</text>
<text x="361.6" y="118.5" textLength="39.4" lengthAdjust="spacingAndGlyphs" style="font-size:15px;fill:#1e1e1e;stroke:#1e1e1e;stroke-width:0.1px;">Select</text>
<text x="372" y="138.7" textLength="17" lengthAdjust="spacingAndGlyphs" style="font-size:15px;fill:#1e1e1e;stroke:#1e1e1e;stroke-width:0.1px;">All</text>
<text x="427" y="118.5" textLength="40" lengthAdjust="spacingAndGlyphs" style="font-size:15px;fill:#ababab;stroke:#ababab;stroke-width:0.1px;">Select</text>
<text x="429" y="138.7" textLength="36" lengthAdjust="spacingAndGlyphs" style="font-size:15px;fill:#ababab;stroke:#ababab;stroke-width:0.1px;">Same</text>
<text x="480" y="119.7" textLength="60.7" lengthAdjust="spacingAndGlyphs" style="font-size:15px;fill:#1e1e1e;stroke:#1e1e1e;stroke-width:0.1px;">Selection</text>
<text x="497" y="139.6" textLength="27" lengthAdjust="spacingAndGlyphs" style="font-size:15px;fill:#1e1e1e;stroke:#1e1e1e;stroke-width:0.1px;">Tree</text>
<text x="577" y="75.4" textLength="67.8" lengthAdjust="spacingAndGlyphs" style="font-size:15px;fill:#1e1e1e;stroke:#1e1e1e;stroke-width:0.1px;">Find Items</text>
<text x="551" y="105" textLength="64" lengthAdjust="spacingAndGlyphs" style="font-size:14px;fill:#7a7a7a;stroke:#7a7a7a;stroke-width:0.1px;font-style:italic">Quick Find</text>
<text x="573" y="138.5" textLength="26" lengthAdjust="spacingAndGlyphs" style="font-size:15px;fill:#111;stroke:#111;stroke-width:0.1px;">Sets</text>
<text x="380.5" y="166" textLength="103" lengthAdjust="spacingAndGlyphs" style="font-size:15px;fill:#1e1e1e;stroke:#1e1e1e;stroke-width:0.1px;">Select &amp; Search</text>
<text x="686.8" y="119.7" textLength="30.6" lengthAdjust="spacingAndGlyphs" style="font-size:15px;fill:#ababab;stroke:#ababab;stroke-width:0.1px;">Hide</text>
<text x="730.5" y="119.7" textLength="50.3" lengthAdjust="spacingAndGlyphs" style="font-size:15px;fill:#ababab;stroke:#ababab;stroke-width:0.1px;">Require</text>
<text x="809.7" y="119.7" textLength="30.6" lengthAdjust="spacingAndGlyphs" style="font-size:15px;fill:#ababab;stroke:#ababab;stroke-width:0.1px;">Hide</text>
<text x="788.4" y="139.3" textLength="71.9" lengthAdjust="spacingAndGlyphs" style="font-size:15px;fill:#ababab;stroke:#ababab;stroke-width:0.1px;">Unselected</text>
<text x="879.3" y="119.7" textLength="46.2" lengthAdjust="spacingAndGlyphs" style="font-size:15px;fill:#1e1e1e;stroke:#1e1e1e;stroke-width:0.1px;">Unhide</text>
<text x="893.9" y="139.3" textLength="17.5" lengthAdjust="spacingAndGlyphs" style="font-size:15px;fill:#1e1e1e;stroke:#1e1e1e;stroke-width:0.1px;">All</text>
<text x="781.6" y="166" textLength="55.4" lengthAdjust="spacingAndGlyphs" style="font-size:15px;fill:#1e1e1e;stroke:#1e1e1e;stroke-width:0.1px;">Visibility</text>
<text x="978" y="75" textLength="31.5" lengthAdjust="spacingAndGlyphs" style="font-size:15px;fill:#1e1e1e;stroke:#1e1e1e;stroke-width:0.1px;">Links</text>
<text x="978" y="106.25" textLength="107.75" lengthAdjust="spacingAndGlyphs" style="font-size:15px;fill:#1e1e1e;stroke:#1e1e1e;stroke-width:0.1px;">Quick Properties</text>
<text x="978" y="137.5" textLength="66.5" lengthAdjust="spacingAndGlyphs" style="font-size:15px;fill:#1e1e1e;stroke:#1e1e1e;stroke-width:0.1px;">Properties</text>
<text x="995.5" y="166" textLength="48.25" lengthAdjust="spacingAndGlyphs" style="font-size:15px;fill:#1e1e1e;stroke:#1e1e1e;stroke-width:0.1px;">Display</text>
<text x="1116" y="118.75" textLength="34.5" lengthAdjust="spacingAndGlyphs" style="font-size:15px;fill:#1e1e1e;stroke:#1e1e1e;stroke-width:0.1px;">Clash</text>
<text x="1103" y="138.75" textLength="61.5" lengthAdjust="spacingAndGlyphs" style="font-size:15px;fill:#1e1e1e;stroke:#1e1e1e;stroke-width:0.1px;">Detective</text>
<text x="1172.5" y="118.75" textLength="64.5" lengthAdjust="spacingAndGlyphs" style="font-size:15px;fill:#1e1e1e;stroke:#1e1e1e;stroke-width:0.1px;">TimeLiner</text>
<text x="1244" y="118.75" textLength="93.5" lengthAdjust="spacingAndGlyphs" style="font-size:15px;fill:#1e1e1e;stroke:#1e1e1e;stroke-width:0.1px;">Quantification</text>
<text x="1374" y="75.8" textLength="133" lengthAdjust="spacingAndGlyphs" style="font-size:15px;fill:#1e1e1e;stroke:#1e1e1e;stroke-width:0.1px;">Autodesk Rendering</text>
<text x="1374" y="107" textLength="61" lengthAdjust="spacingAndGlyphs" style="font-size:15px;fill:#1e1e1e;stroke:#1e1e1e;stroke-width:0.1px;">Animator</text>
<text x="1374" y="138" textLength="51" lengthAdjust="spacingAndGlyphs" style="font-size:15px;fill:#1e1e1e;stroke:#1e1e1e;stroke-width:0.1px;">Scripter</text>
<text x="1548.4" y="75.8" textLength="131" lengthAdjust="spacingAndGlyphs" style="font-size:15px;fill:#1e1e1e;stroke:#1e1e1e;stroke-width:0.1px;">Appearance Profiler</text>
<text x="1548.4" y="107" textLength="79" lengthAdjust="spacingAndGlyphs" style="font-size:15px;fill:#1e1e1e;stroke:#1e1e1e;stroke-width:0.1px;">Batch Utility</text>
<text x="1548.4" y="138" textLength="60" lengthAdjust="spacingAndGlyphs" style="font-size:15px;fill:#ababab;stroke:#ababab;stroke-width:0.1px;">Compare</text>
<text x="1474.5" y="166.6" textLength="34" lengthAdjust="spacingAndGlyphs" style="font-size:15px;fill:#1e1e1e;stroke:#1e1e1e;stroke-width:0.1px;">Tools</text>
<text x="1702.5" y="119" textLength="66.5" lengthAdjust="spacingAndGlyphs" style="font-size:15px;fill:#1e1e1e;stroke:#1e1e1e;stroke-width:0.1px;">DataTools</text>
<text x="1790" y="119" textLength="90.8" lengthAdjust="spacingAndGlyphs" style="font-size:15px;fill:#1e1e1e;stroke:#1e1e1e;stroke-width:0.1px;">App Manager</text>
<text x="10.8" y="1023.75" textLength="38" lengthAdjust="spacingAndGlyphs" style="font-size:14px;fill:#111;stroke:#111;stroke-width:0.1px;">Ready</text>
<text x="1627" y="1022.8" textLength="33" lengthAdjust="spacingAndGlyphs" style="font-size:14px;fill:#222;stroke:#222;stroke-width:0.1px;">1 of 1</text>
<text x="1882" y="1018.75" textLength="21.3" lengthAdjust="spacingAndGlyphs" style="font-size:12px;fill:#222;stroke:#222;stroke-width:0.1px;">1141</text>
<text x="58.4" y="968" textLength="195.3" lengthAdjust="spacingAndGlyphs" style="font-size:17px;fill:#fff;stroke:#fff;stroke-width:0.1px;">E(9)-4(25) : Level 1 (120)</text>
</svg>
</body></html>
